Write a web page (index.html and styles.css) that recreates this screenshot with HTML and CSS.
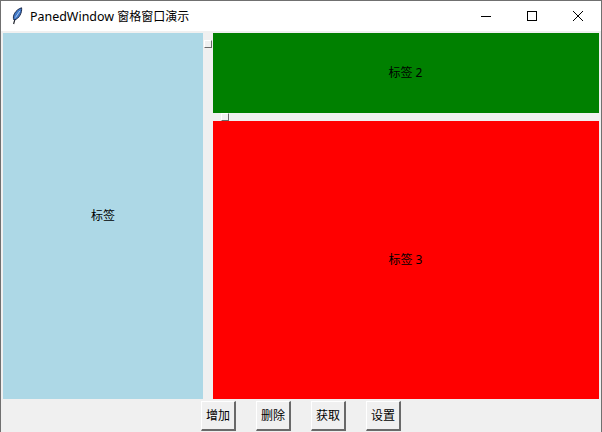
FILE: index.html
```html
<!DOCTYPE html>
<html lang="zh-CN">
<head>
    <meta charset="UTF-8">
    <title>PanedWindow 窗格窗口演示</title>
    <link rel="stylesheet" href="styles.css">
</head>
<body>
    <div class="window">
        <div class="titlebar">
            <svg class="app-icon" width="16" height="18" viewBox="0 0 16 18">
                <path d="M4.6 17 L6 12" stroke="#20242c" stroke-width="1.2" fill="none"/>
                <path d="M5 13 C2.8 9.5 6.5 2.5 12.6 0.8 C13.2 5 10.5 12 5 13 Z" fill="#3f78c8" stroke="#1d2a4a" stroke-width="1"/>
                <path d="M6.5 10.5 L10.8 4" stroke="#a9c6ec" stroke-width="1" fill="none"/>
            </svg>
            <span class="title"><span class="title-latin">PanedWindow </span>窗格窗口演示</span>
            <div class="controls">
                <svg width="46" height="30" viewBox="0 0 46 30"><path d="M18 15.5 H28" stroke="#000" fill="none"/></svg>
                <svg width="46" height="30" viewBox="0 0 46 30"><rect x="18.5" y="10.5" width="9" height="9" stroke="#000" fill="none"/></svg>
                <svg width="46" height="30" viewBox="0 0 46 30"><path d="M18 10 L28 20 M28 10 L18 20" stroke="#000" fill="none"/></svg>
            </div>
        </div>
        <div class="panes">
            <div class="pane pane-blue">标签</div>
            <div class="sash-v"><span class="handle handle-v"></span></div>
            <div class="right-col">
                <div class="pane pane-green">标签 2</div>
                <div class="sash-h"><span class="handle handle-h"></span></div>
                <div class="pane pane-red">标签 3</div>
            </div>
        </div>
        <div class="toolbar">
            <button class="btn">增加</button>
            <button class="btn">删除</button>
            <button class="btn">获取</button>
            <button class="btn">设置</button>
        </div>
    </div>
</body>
</html>
```

FILE: styles.css
```css
html, body {
    margin: 0;
    padding: 0;
}
body {
    width: 602px;
    height: 432px;
    overflow: hidden;
    font-family: "Noto Sans", "Noto Sans CJK SC", sans-serif;
    font-size: 12px;
    color: #000;
}
.window {
    box-sizing: border-box;
    width: 602px;
    height: 432px;
    border: 1px solid #707070;
    border-bottom: none;
    background-color: #f0f0f0;
    display: flex;
    flex-direction: column;
}
.titlebar {
    height: 30px;
    flex: none;
    background-color: #fff;
    display: flex;
    align-items: center;
}
.app-icon {
    margin-left: 8px;
}
.title {
    margin-left: 5px;
    font-size: 12px;
    color: #000;
}
.title-latin {
    font-size: 12.45px;
}
.controls {
    margin-left: auto;
    display: flex;
}
.panes {
    display: flex;
    height: 366px;
    flex: none;
    margin: 2px 2px 0 2px;
}
.pane {
    box-sizing: border-box;
    padding-bottom: 2px;
    display: flex;
    align-items: center;
    justify-content: center;
}
.pane-blue {
    width: 200px;
    background-color: #add8e6;
}
.sash-v {
    width: 10px;
    flex: none;
    position: relative;
}
.right-col {
    flex: 1;
    display: flex;
    flex-direction: column;
}
.pane-green {
    height: 80px;
    padding-right: 1px;
    background-color: #008000;
}
.sash-h {
    height: 8px;
    flex: none;
    position: relative;
}
.pane-red {
    flex: 1;
    padding-right: 1px;
    background-color: #f00;
}
.handle {
    position: absolute;
    box-sizing: border-box;
    width: 8px;
    height: 8px;
    background-color: #f0f0f0;
    border-top: 1px solid #fff;
    border-left: 1px solid #fff;
    border-right: 1px solid #696969;
    border-bottom: 1px solid #696969;
}
.handle-v {
    left: 1px;
    top: 7px;
}
.handle-h {
    left: 8px;
    top: 0;
}
.toolbar {
    display: flex;
    justify-content: center;
    gap: 20px;
    padding-top: 2px;
}
.btn {
    box-sizing: border-box;
    width: 35px;
    height: 30px;
    padding: 0 0 2px 0;
    margin: 0;
    font-family: inherit;
    font-size: 12px;
    color: #000;
    background-color: #f0f0f0;
    border: none;
    border-top: 1px solid #fff;
    border-left: 1px solid #fff;
    border-right: 2px solid #696969;
    border-bottom: 2px solid #696969;
    border-radius: 0;
}
```
